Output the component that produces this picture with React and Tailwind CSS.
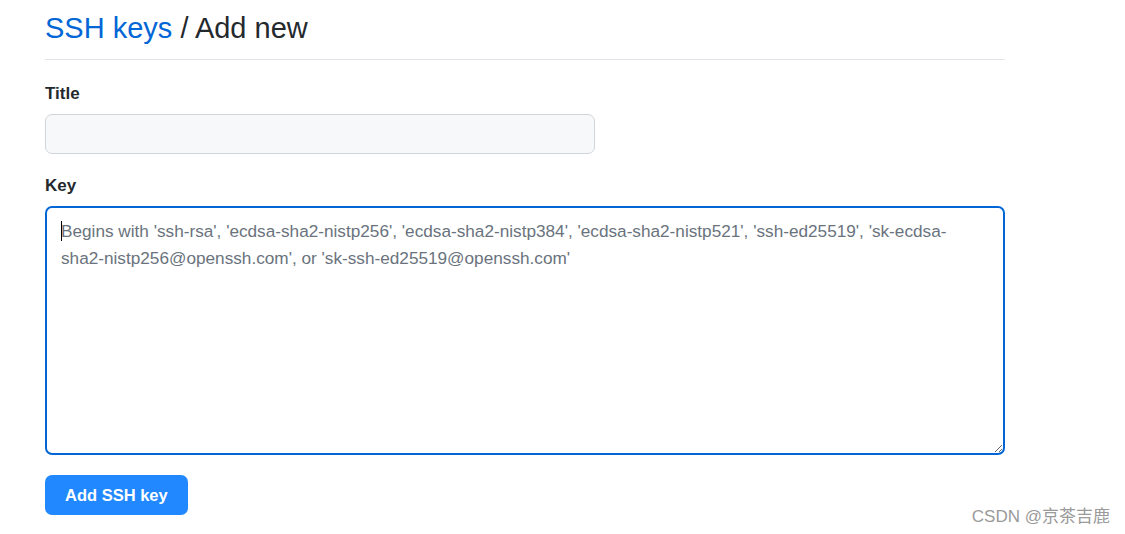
import React from "react";

export default function App() {
  const ph =
    "Begins with 'ssh-rsa', 'ecdsa-sha2-nistp256', 'ecdsa-sha2-nistp384', 'ecdsa-sha2-nistp521', 'ssh-ed25519', 'sk-ecdsa-sha2-nistp256@openssh.com', or 'sk-ssh-ed25519@openssh.com'";
  return (
    <div
      className="relative w-[1125px] h-[534px] bg-white overflow-hidden"
      style={{ fontFamily: '"Liberation Sans", "Noto Sans CJK SC", sans-serif' }}
    >
      <div className="ml-[45px] w-[960px]">
        <div className="pt-[9px] pb-[12px] border-b border-[#e1e4e8]">
          <h2 className="text-[29px] leading-[38px] font-normal text-[#24292e]">
            <a className="text-[#0366d6]">SSH keys</a> / Add new
          </h2>
        </div>
        <div className="mt-[22px]">
          <label className="block text-[17px] leading-[24px] font-bold text-[#24292e]">Title</label>
          <input
            className="mt-[8px] block w-[550px] h-[40px] rounded-[7px] border border-[#d1d5da] bg-[#f6f8fa] outline-none"
          />
        </div>
        <div className="mt-[20px]">
          <label className="block text-[17px] leading-[24px] font-bold text-[#24292e]">Key</label>
          <div className="relative mt-[8px]">
            <textarea
              placeholder={ph}
              className="block w-[960px] h-[249px] rounded-[7px] border-2 border-[#0366d6] bg-white px-[14px] py-[10px] text-[17.2px] leading-[27px] text-[#24292e] placeholder:text-[#6a737d] outline-none"
              style={{ fontFamily: '"Liberation Sans", sans-serif' }}
            />
            <span className="absolute left-[16px] top-[15px] w-[1px] h-[20px] bg-black" />
          </div>
        </div>
        <button className="mt-[20px] h-[40px] px-[20px] rounded-[7px] bg-[#2188ff] text-white text-[16.5px] font-bold">
          Add SSH key
        </button>
      </div>
      <div className="absolute right-[15px] top-[504px] text-[17px] text-[#9a9a9a]">CSDN @京茶吉鹿</div>
    </div>
  );
}
